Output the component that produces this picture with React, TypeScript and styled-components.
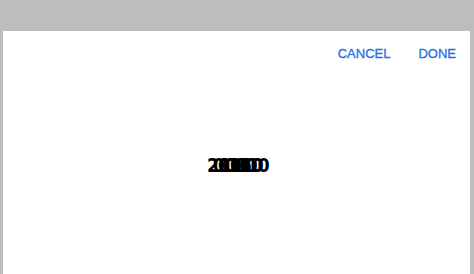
import React from "react";
import styled, { createGlobalStyle } from "styled-components";

const GlobalStyle = createGlobalStyle`
  html, body {
    margin: 0;
    padding: 0;
    background: #bdbdbd;
    font-family: "Liberation Sans", Arial, sans-serif;
  }
`;

const LAYERS: { text: string; offset: number }[] = [
  { text: "2016", offset: 0 },
  { text: "0000", offset: 6 },
  { text: "1010", offset: 12 },
  { text: "0110", offset: 18 },
  { text: "10", offset: 33 },
];

const App: React.FC = () => {
  return (
    <>
      <GlobalStyle />
      <Screen>
        <Sheet>
          <Toolbar>
            <ActionButton>CANCEL</ActionButton>
            <ActionButton>DONE</ActionButton>
          </Toolbar>
          <PickerArea>
            <Stack>
              {LAYERS.map((layer, index) => (
                <Layer key={layer.text + index} offset={layer.offset}>
                  {layer.text}
                </Layer>
              ))}
            </Stack>
          </PickerArea>
        </Sheet>
      </Screen>
    </>
  );
};

const Screen = styled.div`
  width: 474px;
  height: 274px;
  padding: 31px 4px 0 3px;
  box-sizing: border-box;
  display: flex;
  background: #bdbdbd;
`;

const Sheet = styled.div`
  flex: 1;
  display: flex;
  flex-direction: column;
  background: #ffffff;
`;

const Toolbar = styled.div`
  display: flex;
  justify-content: flex-end;
  align-items: center;
  gap: 28px;
  padding: 15px 14px 0 0;
  height: 14px;
`;

const ActionButton = styled.button`
  border: none;
  background: none;
  padding: 0;
  font-family: "Liberation Sans", Arial, sans-serif;
  font-size: 13px;
  font-weight: 500;
  -webkit-text-stroke: 0.3px #1f6fe6;
  color: #1f6fe6;
  cursor: pointer;
`;

const PickerArea = styled.div`
  flex: 1;
  display: flex;
  justify-content: center;
  padding-top: 94px;
  padding-right: 2px;
`;

const Stack = styled.div`
  position: relative;
  width: 57px;
  height: 22px;
`;

const Layer = styled.span<{ offset: number }>`
  position: absolute;
  top: 0;
  left: ${(props) => props.offset}px;
  font-family: "DejaVu Sans Condensed", "DejaVu Sans", sans-serif;
  font-stretch: condensed;
  font-size: 19px;
  font-weight: 700;
  letter-spacing: -1px;
  color: #000000;
  line-height: 22px;
`;

export default App;
